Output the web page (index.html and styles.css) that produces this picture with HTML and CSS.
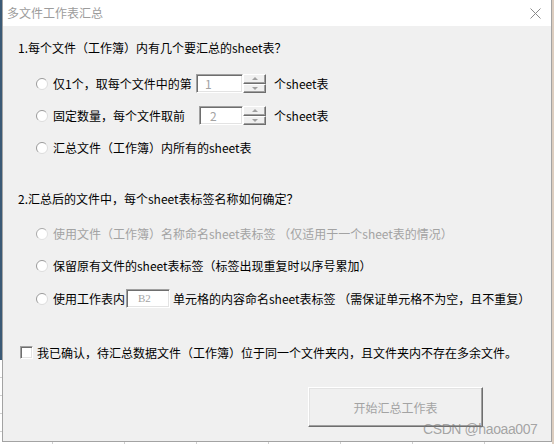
FILE: index.html
```html
<!DOCTYPE html>
<html lang="zh-CN">
<head>
<meta charset="utf-8">
<title>多文件工作表汇总</title>
<link rel="stylesheet" href="styles.css">
</head>
<body>
<div class="desktop">
  <div class="window">
    <div class="titlebar">
      <span class="title">多文件工作表汇总</span>
      <svg class="close" width="11" height="11" viewBox="0 0 11 11"><path d="M0.5 0.5 L10.5 10.5 M10.5 0.5 L0.5 10.5" stroke="#8a8a8a" stroke-width="1" fill="none"/></svg>
    </div>
    <div class="content">
      <div class="heading h1">1.每个文件（工作簿）内有几个要汇总的sheet表？</div>

      <div class="opt r1">
        <svg class="radio" width="12" height="12" viewBox="0 0 12 12"><circle cx="6" cy="6" r="5.5" fill="#fff"/><path d="M2.1 9.9 A5.5 5.5 0 0 1 9.9 2.1" stroke="#9a9a9a" fill="none"/><path d="M9.9 2.1 A5.5 5.5 0 0 1 2.1 9.9" stroke="#dcdcdc" fill="none"/></svg>
        <span class="label lab1">仅1个，取每个文件中的第</span>
        <div class="field f1">1</div>
        <div class="spin"><div class="spin-btn"><i class="arrow up"></i></div><div class="spin-btn"><i class="arrow down"></i></div></div>
        <span class="unit">个sheet表</span>
      </div>

      <div class="opt r2">
        <svg class="radio" width="12" height="12" viewBox="0 0 12 12"><circle cx="6" cy="6" r="5.5" fill="#fff"/><path d="M2.1 9.9 A5.5 5.5 0 0 1 9.9 2.1" stroke="#9a9a9a" fill="none"/><path d="M9.9 2.1 A5.5 5.5 0 0 1 2.1 9.9" stroke="#dcdcdc" fill="none"/></svg>
        <span class="label lab2">固定数量，每个文件取前</span>
        <div class="field f2">2</div>
        <div class="spin"><div class="spin-btn"><i class="arrow up"></i></div><div class="spin-btn"><i class="arrow down"></i></div></div>
        <span class="unit">个sheet表</span>
      </div>

      <div class="opt r3">
        <svg class="radio" width="12" height="12" viewBox="0 0 12 12"><circle cx="6" cy="6" r="5.5" fill="#fff"/><path d="M2.1 9.9 A5.5 5.5 0 0 1 9.9 2.1" stroke="#9a9a9a" fill="none"/><path d="M9.9 2.1 A5.5 5.5 0 0 1 2.1 9.9" stroke="#dcdcdc" fill="none"/></svg>
        <span class="label">汇总文件（工作簿）内所有的sheet表</span>
      </div>

      <div class="heading h2">2.汇总后的文件中，每个sheet表标签名称如何确定？</div>

      <div class="opt ra">
        <svg class="radio" width="12" height="12" viewBox="0 0 12 12"><circle cx="6" cy="6" r="5.5" fill="#fff"/><path d="M2.1 9.9 A5.5 5.5 0 0 1 9.9 2.1" stroke="#a8a8a8" fill="none"/><path d="M9.9 2.1 A5.5 5.5 0 0 1 2.1 9.9" stroke="#e0e0e0" fill="none"/></svg>
        <span class="label disabled">使用文件（工作簿）名称命名sheet表标签 （仅适用于一个sheet表的情况）</span>
      </div>

      <div class="opt rb">
        <svg class="radio" width="12" height="12" viewBox="0 0 12 12"><circle cx="6" cy="6" r="5.5" fill="#fff"/><path d="M2.1 9.9 A5.5 5.5 0 0 1 9.9 2.1" stroke="#9a9a9a" fill="none"/><path d="M9.9 2.1 A5.5 5.5 0 0 1 2.1 9.9" stroke="#dcdcdc" fill="none"/></svg>
        <span class="label">保留原有文件的sheet表标签（标签出现重复时以序号累加）</span>
      </div>

      <div class="opt rc">
        <svg class="radio" width="12" height="12" viewBox="0 0 12 12"><circle cx="6" cy="6" r="5.5" fill="#fff"/><path d="M2.1 9.9 A5.5 5.5 0 0 1 9.9 2.1" stroke="#9a9a9a" fill="none"/><path d="M9.9 2.1 A5.5 5.5 0 0 1 2.1 9.9" stroke="#dcdcdc" fill="none"/></svg>
        <span class="label lab3">使用工作表内</span>
        <div class="field f3">B2</div>
        <span class="label after">单元格的内容命名sheet表标签 （需保证单元格不为空，且不重复）</span>
      </div>

      <div class="check-row">
        <span class="checkbox"></span>
        <span class="label">我已确认，待汇总数据文件（工作簿）位于同一个文件夹内，且文件夹内不存在多余文件。</span>
      </div>

      <div class="btn-row">
        <div class="button">开始汇总工作表</div>
      </div>
    </div>
    <div class="watermark">CSDN @haoaa007</div>
  </div>
</div>
</body>
</html>
```

FILE: styles.css
```css
html, body {
  margin: 0;
  padding: 0;
}

.desktop {
  width: 554px;
  height: 444px;
  overflow: hidden;
  background:
    linear-gradient(to bottom, #3b5a76 0, #3b5a76 360px, transparent 360px) left top / 2px 100% no-repeat,
    linear-gradient(#dccdbf, #dccdbf) right top / 2px 100% no-repeat,
    repeating-linear-gradient(90deg, transparent 0 52px, #d0d0d0 52px 53px, transparent 53px 72px),
    repeating-linear-gradient(180deg, transparent 0 17px, #d0d0d0 17px 18px),
    #ffffff;
}

.window {
  position: relative;
  margin-left: 2px;
  width: 550px;
  height: 442px;
  box-sizing: border-box;
  border: 1px solid #a3a3a3;
  border-top: 0;
  background: #f0f0f0;
  display: flex;
  flex-direction: column;
  font-family: "Noto Sans CJK SC", "Noto Sans", sans-serif;
  font-size: 12px;
  color: #000;
}

.titlebar {
  height: 26px;
  flex-shrink: 0;
  background: #ffffff;
  display: flex;
  align-items: center;
  justify-content: space-between;
  padding: 0 10px 0 4px;
}

.title {
  color: #9c9c9c;
  font-size: 12px;
  line-height: 16px;
}

.close {
  display: block;
}

.content {
  display: flex;
  flex-direction: column;
}

.heading {
  height: 20px;
  line-height: 20px;
  padding-left: 15px;
  white-space: nowrap;
}

.h1 { margin-top: 12px; }
.h2 { margin-top: 31px; }

.opt {
  display: flex;
  align-items: center;
  padding-left: 33px;
  height: 20px;
  line-height: 20px;
  white-space: nowrap;
}

.r1 { margin-top: 16px; height: 19px; }
.r2 { margin-top: 13px; height: 19px; }
.r3 { margin-top: 13px; }
.ra { margin-top: 15px; }
.rb { margin-top: 12px; }
.rc { margin-top: 13px; height: 19px; }

.radio {
  display: block;
  flex-shrink: 0;
  margin-right: 5px;
}

.label {
  flex-shrink: 0;
}

.lab1 { width: 143px; }
.lab2 { width: 146px; }
.lab3 { width: 73px; }

.disabled { color: #a3a3a3; }

.field {
  flex-shrink: 0;
  height: 19px;
  box-sizing: border-box;
  background: #ffffff;
  border: 1px solid;
  border-color: #a0a0a0 #ffffff #ffffff #a0a0a0;
  box-shadow: inset 1px 1px 0 #6e6e6e, inset -1px -1px 0 #e3e3e3;
  color: #a3a3a3;
  line-height: 17px;
  font-size: 12px;
}

.f1 { width: 47px; padding-left: 8px; }
.f2 { width: 44px; padding-left: 10px; }
.f3 { width: 44px; padding-left: 11px; font-family: "Liberation Serif", serif; font-size: 11px; }

.spin {
  flex-shrink: 0;
  width: 23px;
  height: 19px;
  display: flex;
  flex-direction: column;
}

.spin-btn {
  flex: 1;
  box-sizing: border-box;
  background: #f0f0f0;
  border: 1px solid;
  border-color: #ffffff #6e6e6e #6e6e6e #ffffff;
  box-shadow: inset -1px -1px 0 #a0a0a0;
  display: flex;
  align-items: center;
  justify-content: center;
}

.arrow {
  display: block;
  width: 0;
  height: 0;
  border-left: 3px solid transparent;
  border-right: 3px solid transparent;
}

.arrow.up { border-bottom: 3px solid #a0a0a0; }
.arrow.down { border-top: 3px solid #a0a0a0; }

.unit {
  margin-left: 8px;
}

.after {
  margin-left: 3px;
}

.check-row {
  margin-top: 34px;
  height: 20px;
  display: flex;
  align-items: center;
  padding-left: 17px;
  white-space: nowrap;
}

.checkbox {
  display: block;
  flex-shrink: 0;
  width: 13px;
  height: 13px;
  box-sizing: border-box;
  background: #ffffff;
  border: 1px solid;
  border-color: #a0a0a0 #ffffff #ffffff #a0a0a0;
  box-shadow: inset 1px 1px 0 #6e6e6e, inset -1px -1px 0 #e3e3e3;
  margin-right: 4px;
}

.btn-row {
  margin-top: 25px;
  padding-left: 305px;
  display: flex;
}

.button {
  width: 175px;
  height: 40px;
  box-sizing: border-box;
  background: #f0f0f0;
  border: 1px solid;
  border-color: #ffffff #6e6e6e #6e6e6e #ffffff;
  box-shadow: inset -1px -1px 0 #a0a0a0, inset 1px 1px 0 #e3e3e3;
  display: flex;
  align-items: center;
  justify-content: center;
  color: #a3a3a3;
  font-size: 12px;
}

.watermark {
  position: absolute;
  left: 420px;
  top: 421px;
  font-family: "Liberation Sans", Arial, sans-serif;
  font-size: 14px;
  line-height: 16px;
  letter-spacing: -0.4px;
  color: rgba(120, 120, 120, 0.65);
  white-space: nowrap;
}
```
